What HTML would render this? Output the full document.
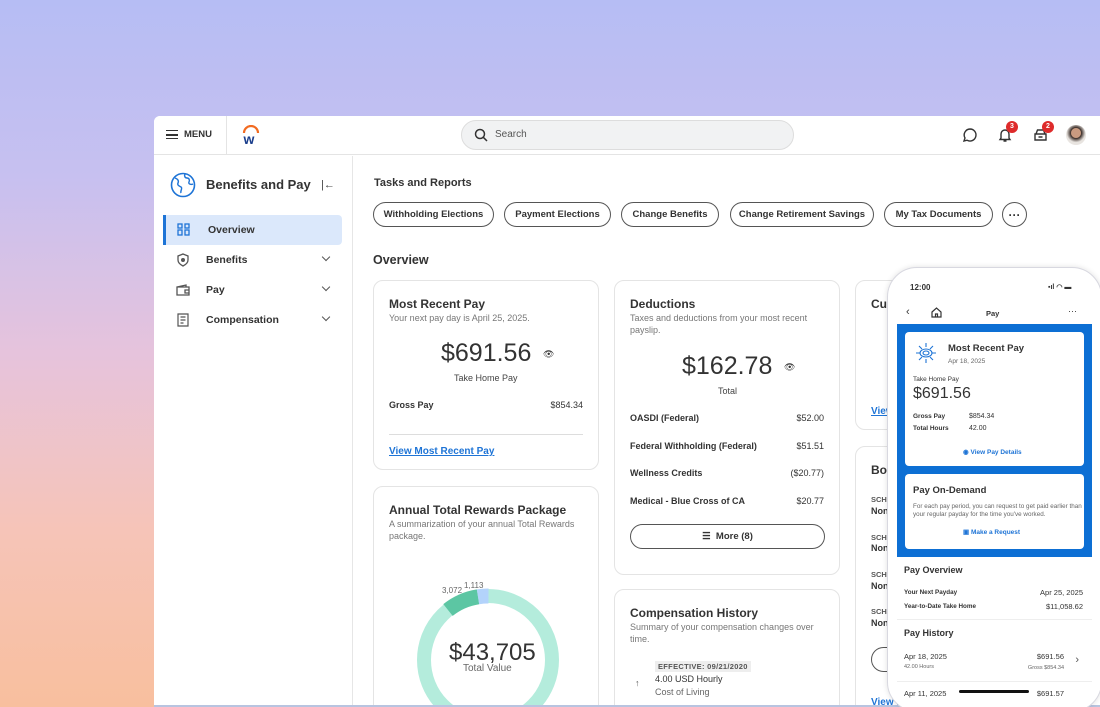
<!DOCTYPE html>
<html style="background:#f8bf9e"><head><meta charset="utf-8"><style>
*{box-sizing:border-box;margin:0;padding:0}
html,body{width:1100px;height:707px;overflow:hidden}
body{font-family:"Liberation Sans",sans-serif;color:#333;position:relative;
background:linear-gradient(180deg,#b6bdf4 0%,#c7c0f0 25%,#e6c3dc 50%,#f6c4b8 75%,#f8bf9e 100%);}
.abs{position:absolute}
.win{position:absolute;left:154px;top:116px;width:960px;height:590px;background:#fff;border-radius:6px 0 0 0;overflow:hidden}
.hdr{position:absolute;left:0;top:0;width:100%;height:39px;border-bottom:1px solid #e4e4e4;background:#fff}
.side{position:absolute;left:0;top:40px;width:199px;height:560px;border-right:1px solid #e6e6e6}
.nav{position:absolute;left:10px;width:179px;height:30px;font-size:10.5px;font-weight:bold;color:#333;display:flex;align-items:center;padding-left:42px}
.chev{position:absolute;right:14px;top:9px;width:6px;height:6px;border-right:1.3px solid #555;border-bottom:1.3px solid #555;transform:rotate(45deg)}
.pill{position:absolute;top:86px;height:25px;border:1.3px solid #555;border-radius:13px;font-size:9.5px;font-weight:bold;display:flex;align-items:center;justify-content:center;color:#333}
.card{position:absolute;border:1px solid #e4e4e4;border-radius:10px;background:#fff;overflow:hidden}
.t{font-size:12px;font-weight:bold;color:#333}
.s{font-size:9px;color:#777;line-height:12px}
.row{position:absolute;left:15px;right:15px;font-size:9px;font-weight:bold;color:#333}
.row span{position:absolute;right:0;font-weight:normal}
</style></head><body>
<div class="win">
 <div class="hdr">
  <div class="abs" style="left:12px;top:14px;width:12px;height:9px;border-top:1.5px solid #333;border-bottom:1.5px solid #333"></div>
  <div class="abs" style="left:12px;top:18px;width:12px;height:1.5px;background:#333"></div>
  <div class="abs" style="left:30px;top:13px;font-size:9.5px;font-weight:bold;color:#333">MENU</div>
  <div class="abs" style="left:72px;top:0;width:1px;height:39px;background:#e4e4e4"></div>
  <svg class="abs" style="left:88px;top:9px" width="18" height="20" viewBox="0 0 18 20"><path d="M2 8 A7 7 0 0 1 16 8" fill="none" stroke="#f26b21" stroke-width="2.2"/><text x="1.5" y="19" font-family="Liberation Sans" font-weight="bold" font-size="14" fill="#1a3e8c">w</text></svg>
  <div class="abs" style="left:307px;top:4px;width:333px;height:30px;border-radius:15px;background:#f1f2f3;border:1px solid #ddd"></div>
  <svg class="abs" style="left:320px;top:12px" width="14" height="14" viewBox="0 0 14 14"><circle cx="6" cy="6" r="4.5" fill="none" stroke="#333" stroke-width="1.5"/><path d="M9.3 9.3 L13 13" stroke="#333" stroke-width="1.5"/></svg>
  <div class="abs" style="left:341px;top:13px;font-size:10px;color:#555">Search</div>
  <svg class="abs" style="left:808px;top:11px" width="16" height="16" viewBox="0 0 16 16"><path d="M8 2a6 6 0 1 1-3 11.2L2 14l1-3A6 6 0 0 1 8 2z" fill="none" stroke="#333" stroke-width="1.4"/></svg>
  <svg class="abs" style="left:844px;top:11px" width="14" height="16" viewBox="0 0 14 16"><path d="M3 11V7a4 4 0 0 1 8 0v4l1 1.5H2z M5.5 14h3" fill="none" stroke="#333" stroke-width="1.4"/></svg>
  <div class="abs" style="left:852px;top:5px;width:12px;height:12px;border-radius:6px;background:#de2b2b;color:#fff;font-size:7px;font-weight:bold;text-align:center;line-height:12px">3</div>
  <svg class="abs" style="left:879px;top:12px" width="15" height="14" viewBox="0 0 15 14"><path d="M2 6h11v6H2z M3 6l1.5-4h6L12 6 M5.5 9h4" fill="none" stroke="#333" stroke-width="1.4"/></svg>
  <div class="abs" style="left:888px;top:5px;width:12px;height:12px;border-radius:6px;background:#de2b2b;color:#fff;font-size:7px;font-weight:bold;text-align:center;line-height:12px">2</div>
  <div class="abs" style="left:912px;top:9px;width:20px;height:20px;border-radius:10px;background:radial-gradient(circle at 50% 40%,#c99a80 30%,#3a2d28 34%,#e8e4e0 60%)"></div>
 </div>
 <div class="side">
  <svg class="abs" style="left:16px;top:16px" width="26" height="26" viewBox="0 0 26 26"><circle cx="13" cy="13" r="11.5" fill="none" stroke="#1e74d6" stroke-width="1.6"/><path d="M5 6c3 1 4 3 3 5s1 3 3 4-1 4 0 6 M15 2c-1 2 0 4 2 4s3 2 2 4 2 3 4 2" fill="none" stroke="#1e74d6" stroke-width="1.4"/></svg>
  <div class="abs" style="left:52px;top:21px;font-size:13px;font-weight:bold;color:#333">Benefits and Pay</div>
  <div class="abs" style="left:167px;top:23px;font-size:11px;color:#444">|&larr;</div>
  <div class="nav" style="top:59px;background:#dbe8fb;border-radius:0 4px 4px 0;border-left:3px solid #1e74d6;left:9px">Overview</div>
  <svg class="abs" style="left:23px;top:67px" width="13" height="13" viewBox="0 0 13 13"><g fill="none" stroke="#1e74d6" stroke-width="1.3"><rect x="1" y="1" width="4" height="4"/><rect x="8" y="1" width="4" height="4"/><rect x="1" y="7" width="4" height="5"/><rect x="8" y="7" width="4" height="5"/></g></svg>
  <div class="nav" style="top:89px">Benefits<div class="chev"></div></div>
  <svg class="abs" style="left:23px;top:97px" width="12" height="14" viewBox="0 0 12 14"><path d="M6 1 L11 3 V7 C11 10 8 12 6 13 C4 12 1 10 1 7 V3z" fill="none" stroke="#555" stroke-width="1.3"/><circle cx="6" cy="7" r="2" fill="#555"/></svg>
  <div class="nav" style="top:119px">Pay<div class="chev"></div></div>
  <svg class="abs" style="left:22px;top:128px" width="14" height="12" viewBox="0 0 14 12"><path d="M1 3h12v8H1z M1 3l9-2v2 M9 6h4v3H9z" fill="none" stroke="#555" stroke-width="1.3"/></svg>
  <div class="nav" style="top:149px">Compensation<div class="chev"></div></div>
  <svg class="abs" style="left:23px;top:157px" width="12" height="14" viewBox="0 0 12 14"><path d="M1 1h10v12H1z M3.5 4h5 M3.5 7h5 M3.5 10h3" fill="none" stroke="#555" stroke-width="1.2"/></svg>
 </div>
 <div class="abs" style="left:220px;top:61px;font-size:11px;font-weight:bold;color:#333">Tasks and Reports</div>
 <div class="pill" style="left:219px;width:121px">Withholding Elections</div>
 <div class="pill" style="left:350px;width:107px">Payment Elections</div>
 <div class="pill" style="left:467px;width:98px">Change Benefits</div>
 <div class="pill" style="left:576px;width:144px">Change Retirement Savings</div>
 <div class="pill" style="left:730px;width:109px">My Tax Documents</div>
 <div class="pill" style="left:848px;width:25px;font-size:12px;line-height:8px">···</div>
 <div class="abs" style="left:219px;top:137px;font-size:12.5px;font-weight:bold;color:#333">Overview</div>

 <div class="card" style="left:219px;top:164px;width:226px;height:190px">
  <div class="abs t" style="left:15px;top:16px">Most Recent Pay</div>
  <div class="abs s" style="left:15px;top:31px">Your next pay day is April 25, 2025.</div>
  <div class="abs" style="left:67px;top:58px;font-size:25px;color:#333">$691.56</div>
  <div class="abs" style="left:169px;top:68px;font-size:9px">👁</div>
  <div class="abs" style="left:80px;top:92px;font-size:9px;color:#444">Take Home Pay</div>
  <div class="row" style="top:119px">Gross Pay<span>$854.34</span></div>
  <div class="abs" style="left:15px;right:15px;top:153px;height:1px;background:#ddd"></div>
  <div class="abs" style="left:15px;top:165px;font-size:10px;font-weight:bold;color:#1e74d6;text-decoration:underline">View Most Recent Pay</div>
 </div>
 <div class="card" style="left:219px;top:370px;width:226px;height:250px">
  <div class="abs t" style="left:15px;top:16px">Annual Total Rewards Package</div>
  <div class="abs s" style="left:15px;top:31px;width:195px">A summarization of your annual Total Rewards package.</div>
  <svg class="abs" style="left:30px;top:90px" width="170" height="160" viewBox="0 0 170 160"><circle cx="84" cy="83" r="64" fill="none" stroke="#b4ecdc" stroke-width="14"/><path d="M44 33 A64 64 0 0 1 74 19.8" fill="none" stroke="#5cc6a3" stroke-width="15"/><path d="M74 19.8 A64 64 0 0 1 84.5 19" fill="none" stroke="#b3d3fb" stroke-width="15"/><text x="38" y="16" font-size="8" fill="#666" font-family="Liberation Sans">3,072</text><text x="60" y="11" font-size="8" fill="#666" font-family="Liberation Sans">1,113</text></svg>
  <div class="abs" style="left:75px;top:152px;font-size:24px;color:#333">$43,705</div>
  <div class="abs" style="left:89px;top:176px;font-size:10px;color:#666">Total Value</div>
 </div>
 <div class="card" style="left:460px;top:164px;width:226px;height:295px">
  <div class="abs t" style="left:15px;top:16px">Deductions</div>
  <div class="abs s" style="left:15px;top:31px;width:195px">Taxes and deductions from your most recent payslip.</div>
  <div class="abs" style="left:67px;top:71px;font-size:25px;color:#333">$162.78</div>
  <div class="abs" style="left:169px;top:81px;font-size:9px">👁</div>
  <div class="abs" style="left:103px;top:105px;font-size:9px;color:#444">Total</div>
  <div class="row" style="top:132px">OASDI (Federal)<span>$52.00</span></div>
  <div class="row" style="top:160px">Federal Withholding (Federal)<span>$51.51</span></div>
  <div class="row" style="top:187px">Wellness Credits<span>($20.77)</span></div>
  <div class="row" style="top:215px">Medical - Blue Cross of CA<span>$20.77</span></div>
  <div class="abs" style="left:15px;top:243px;width:195px;height:25px;border:1.3px solid #555;border-radius:13px;font-size:9.5px;font-weight:bold;text-align:center;line-height:23px">☰&nbsp; More (8)</div>
 </div>
 <div class="card" style="left:460px;top:473px;width:226px;height:150px">
  <div class="abs t" style="left:15px;top:16px">Compensation History</div>
  <div class="abs s" style="left:15px;top:31px;width:195px">Summary of your compensation changes over time.</div>
  <div class="abs" style="left:40px;top:71px;font-size:7.5px;font-weight:bold;color:#555;background:#eee;padding:1px 3px;letter-spacing:.3px">EFFECTIVE: 09/21/2020</div>
  <div class="abs" style="left:40px;top:84px;font-size:9px;color:#333">4.00 USD Hourly</div>
  <div class="abs" style="left:40px;top:97px;font-size:9px;color:#666">Cost of Living</div>
  <div class="abs" style="left:20px;top:88px;font-size:9px;color:#555">↑</div>
 </div>
 <div class="card" style="left:701px;top:164px;width:226px;height:150px">
  <div class="abs t" style="left:15px;top:16px">Current</div>
  <div class="abs" style="left:15px;top:125px;font-size:10px;font-weight:bold;color:#1e74d6;text-decoration:underline">View</div>
 </div>
 <div class="card" style="left:701px;top:330px;width:226px;height:290px">
  <div class="abs t" style="left:15px;top:16px">Bonus</div>
  <div class="abs" style="left:15px;top:48px;font-size:7.5px;font-weight:bold;color:#555">SCH</div><div class="abs" style="left:15px;top:59px;font-size:9px;font-weight:bold">Non</div>
  <div class="abs" style="left:15px;top:86px;font-size:7.5px;font-weight:bold;color:#555">SCH</div><div class="abs" style="left:15px;top:96px;font-size:9px;font-weight:bold">Non</div>
  <div class="abs" style="left:15px;top:123px;font-size:7.5px;font-weight:bold;color:#555">SCH</div><div class="abs" style="left:15px;top:134px;font-size:9px;font-weight:bold">Non</div>
  <div class="abs" style="left:15px;top:160px;font-size:7.5px;font-weight:bold;color:#555">SCH</div><div class="abs" style="left:15px;top:171px;font-size:9px;font-weight:bold">Non</div>
  <div class="abs" style="left:15px;top:200px;width:60px;height:25px;border:1.3px solid #555;border-radius:13px"></div>
  <div class="abs" style="left:15px;top:250px;font-size:10px;font-weight:bold;color:#1e74d6">View Bo</div>
 </div>
</div>
<div class="abs" style="left:154px;top:705px;width:946px;height:2px;background:#b8c4e0"></div>

<!-- phone -->
<div class="abs" style="left:887px;top:267px;width:215px;height:445px;border-radius:30px;background:#fff;border:1px solid #d8d8e0;box-shadow:0 0 6px rgba(0,0,0,.12);overflow:hidden">
 <div class="abs" style="left:22px;top:15px;font-size:8px;font-weight:bold">12:00</div>
 <div class="abs" style="left:160px;top:15px;font-size:7px;font-weight:bold">▪ıl ◠ ▬</div>
 <div class="abs" style="left:18px;top:38px;font-size:11px">‹</div>
 <svg class="abs" style="left:43px;top:39px" width="11" height="11" viewBox="0 0 11 11"><path d="M1 5L5.5 1 10 5V10H1z M4.5 10V7h2v3" fill="none" stroke="#333" stroke-width="1.2"/></svg>
 <div class="abs" style="left:98px;top:41px;font-size:7.5px;font-weight:bold">Pay</div>
 <div class="abs" style="left:180px;top:38px;font-size:9px">···</div>
 <div class="abs" style="left:9px;top:56px;width:195px;height:233px;background:#0d6fd4"></div>
 <div class="abs" style="left:17px;top:64px;width:179px;height:134px;background:#fff;border-radius:4px">
  <svg class="abs" style="left:10px;top:10px" width="22" height="22" viewBox="0 0 22 22"><g fill="none" stroke="#1e74d6" stroke-width="1.1"><ellipse cx="11" cy="11" rx="6" ry="4"/><ellipse cx="11" cy="11" rx="3" ry="2"/><path d="M11 1v4M11 17v4M1 11h4M17 11h4M4 4l3 3M18 4l-3 3M4 18l3-3M18 18l-3-3"/></g></svg>
  <div class="abs" style="left:43px;top:11px;font-size:9.5px;font-weight:bold">Most Recent Pay</div>
  <div class="abs" style="left:43px;top:26px;font-size:6.5px;color:#666">Apr 18, 2025</div>
  <div class="abs" style="left:8px;top:44px;font-size:6.5px;color:#333">Take Home Pay</div>
  <div class="abs" style="left:8px;top:53px;font-size:16px;color:#333">$691.56</div>
  <div class="abs" style="left:8px;top:81px;font-size:6.5px;font-weight:bold">Gross Pay</div><div class="abs" style="left:64px;top:81px;font-size:7px">$854.34</div>
  <div class="abs" style="left:8px;top:93px;font-size:6.5px;font-weight:bold">Total Hours</div><div class="abs" style="left:64px;top:93px;font-size:7px">42.00</div>
  <div class="abs" style="left:58px;top:116px;font-size:6.5px;font-weight:bold;color:#1e74d6">◉ View Pay Details</div>
 </div>
 <div class="abs" style="left:17px;top:206px;width:179px;height:75px;background:#fff;border-radius:4px">
  <div class="abs" style="left:8px;top:11px;font-size:9.5px;font-weight:bold">Pay On-Demand</div>
  <div class="abs" style="left:8px;top:29px;font-size:6.3px;color:#666;line-height:8px;width:170px">For each pay period, you can request to get paid earlier than your regular payday for the time you've worked.</div>
  <div class="abs" style="left:58px;top:54px;font-size:6.5px;font-weight:bold;color:#1e74d6">▣ Make a Request</div>
 </div>
 <div class="abs" style="left:16px;top:297px;font-size:9px;font-weight:bold">Pay Overview</div>
 <div class="abs" style="left:16px;top:321px;font-size:6.3px;font-weight:bold">Your Next Payday</div><div class="abs" style="right:18px;top:320px;font-size:7.5px">Apr 25, 2025</div>
 <div class="abs" style="left:16px;top:335px;font-size:6.3px;font-weight:bold">Year-to-Date Take Home</div><div class="abs" style="right:18px;top:334px;font-size:7.5px">$11,058.62</div>
 <div class="abs" style="left:9px;top:351px;width:195px;height:1px;background:#eee"></div>
 <div class="abs" style="left:16px;top:360px;font-size:9px;font-weight:bold">Pay History</div>
 <div class="abs" style="left:16px;top:384px;font-size:7.5px">Apr 18, 2025</div><div class="abs" style="left:16px;top:396px;font-size:5.5px;color:#666">42.00 Hours</div>
 <div class="abs" style="right:37px;top:384px;font-size:7.5px">$691.56</div><div class="abs" style="right:37px;top:397px;font-size:5.5px;color:#666">Gross $854.34</div>
 <div class="abs" style="right:22px;top:386px;font-size:11px;color:#555">›</div>
 <div class="abs" style="left:9px;top:413px;width:195px;height:1px;background:#eee"></div>
 <div class="abs" style="left:16px;top:421px;font-size:7.5px">Apr 11, 2025</div><div class="abs" style="right:37px;top:421px;font-size:7.5px">$691.57</div>
 <div class="abs" style="left:71px;top:422px;width:70px;height:3px;border-radius:2px;background:#111"></div>
</div>
</body></html>
